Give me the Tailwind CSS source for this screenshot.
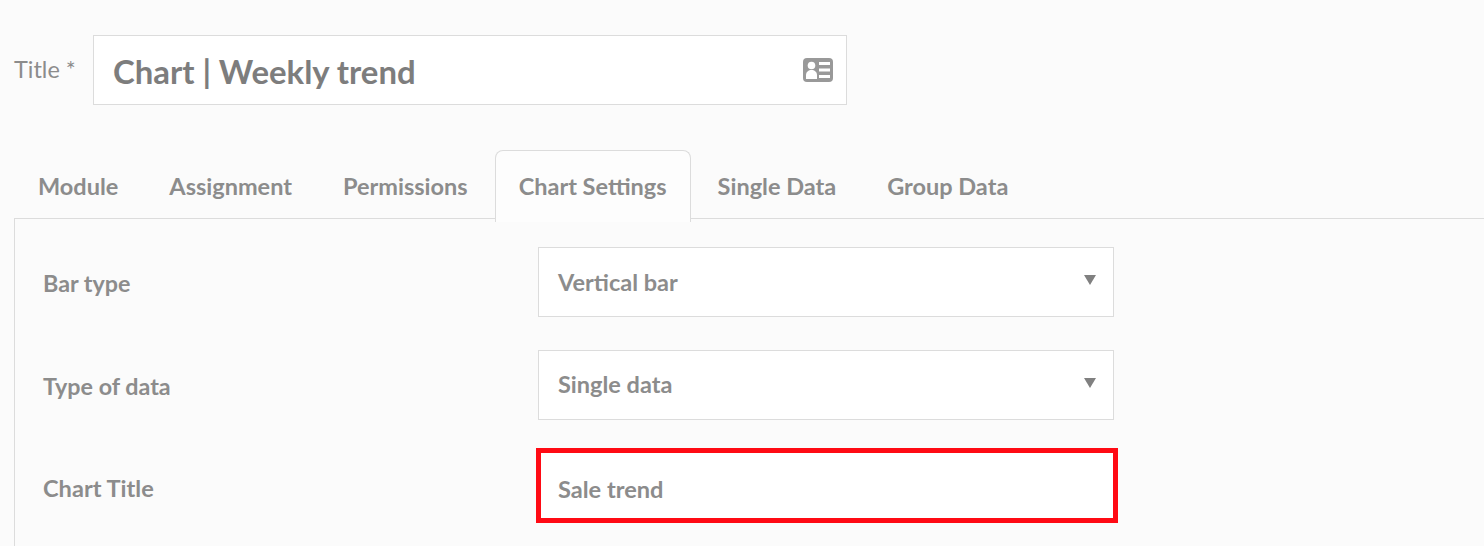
<!DOCTYPE html>
<html>
<head>
<meta charset="utf-8">
<script src="https://cdn.jsdelivr.net/npm/@tailwindcss/browser@4"></script>
</head>
<body class="bg-[#fbfbfb] font-['Lato',sans-serif] h-[546px] overflow-hidden">
    <div class="flex items-start pt-[35px] pl-[14px]">
        <label class="w-[79px] pt-[19px] text-[23.500px] leading-[30px] text-[#8c8c8c]">Title *</label>
        <div class="flex items-center justify-between w-[754px] h-[70px] bg-white border border-[#dcdcdc] pl-[19px] pr-[13px]">
            <span class="pt-[4px] text-[32.900px] font-bold text-[#7d7d7d]">Chart | Weekly trend</span>
            <svg class="w-[30px] h-[24px]" viewBox="0 0 30 24">
                <rect x="0" y="0" width="30" height="24" rx="4" fill="#999999"/>
                <circle cx="8.500" cy="7.500" r="3.800" fill="#fff"/>
                <path d="M3 21v-4c0-3 2.500-5 5.500-5S14 14 14 17v4z" fill="#fff"/>
                <rect x="16" y="4" width="11" height="3" fill="#fff"/>
                <rect x="16" y="10.500" width="11" height="3" fill="#fff"/>
                <rect x="16" y="17" width="11" height="3" fill="#fff"/>
            </svg>
        </div>
    </div>

    <div class="flex items-start mt-[45px] ml-[14px] h-[69px] border-b border-[#dcdcdc]">
        <a class="px-[24px] pt-[19px] mr-[3px] text-[23.500px] font-bold leading-[34px] text-[#8c8c8c]">Module</a>
        <a class="px-[24px] pt-[19px] mr-[3px] text-[23.500px] font-bold leading-[34px] text-[#8c8c8c]">Assignment</a>
        <a class="px-[24px] pt-[19px] mr-[3px] text-[23.500px] font-bold leading-[34px] text-[#8c8c8c]">Permissions</a>
        <a class="h-[72px] px-[23px] pt-[18px] mr-[3px] text-[23.500px] font-bold leading-[34px] text-[#8c8c8c] bg-[#fdfdfd] border border-b-0 border-[#dcdcdc] rounded-t-[8px]">Chart Settings</a>
        <a class="px-[24px] pt-[19px] mr-[3px] text-[23.500px] font-bold leading-[34px] text-[#8c8c8c]">Single Data</a>
        <a class="px-[24px] pt-[19px] mr-[3px] text-[23.500px] font-bold leading-[34px] text-[#8c8c8c]">Group Data</a>
    </div>

    <div class="ml-[14px] border-l border-[#dcdcdc] pl-[28px] pt-[28px] h-[327px]">
        <div class="flex items-center h-[70px] mb-[33px]">
            <label class="w-[495px] pt-[3px] text-[23.300px] font-bold text-[#8c8c8c]">Bar type</label>
            <div class="relative flex items-center w-[576px] h-[70px] bg-white border border-[#dcdcdc] pl-[19px] pt-[2px] text-[23.500px] font-bold text-[#8c8c8c]">
                Vertical bar
                <span class="absolute right-[17px] top-[27px] w-0 h-0 border-x-[6px] border-x-transparent border-t-[10px] border-t-[#808080]"></span>
            </div>
        </div>
        <div class="flex items-center h-[70px] mb-[28px]">
            <label class="w-[495px] pt-[3px] text-[23.300px] font-bold text-[#8c8c8c]">Type of data</label>
            <div class="relative flex items-center w-[576px] h-[70px] bg-white border border-[#dcdcdc] pl-[19px] pb-[1px] text-[23.500px] font-bold text-[#8c8c8c]">
                Single data
                <span class="absolute right-[17px] top-[27px] w-0 h-0 border-x-[6px] border-x-transparent border-t-[10px] border-t-[#808080]"></span>
            </div>
        </div>
        <div class="flex items-center h-[75px]">
            <label class="w-[493px] pt-[6px] text-[23.600px] font-bold text-[#8c8c8c]">Chart Title</label>
            <div class="flex items-center w-[582px] h-[75px] bg-white border-[5px] border-[#ff0a14] pl-[17px] pt-[8px] text-[23.600px] font-bold text-[#8c8c8c]">
                Sale trend
            </div>
        </div>
    </div>
</body>
</html>
